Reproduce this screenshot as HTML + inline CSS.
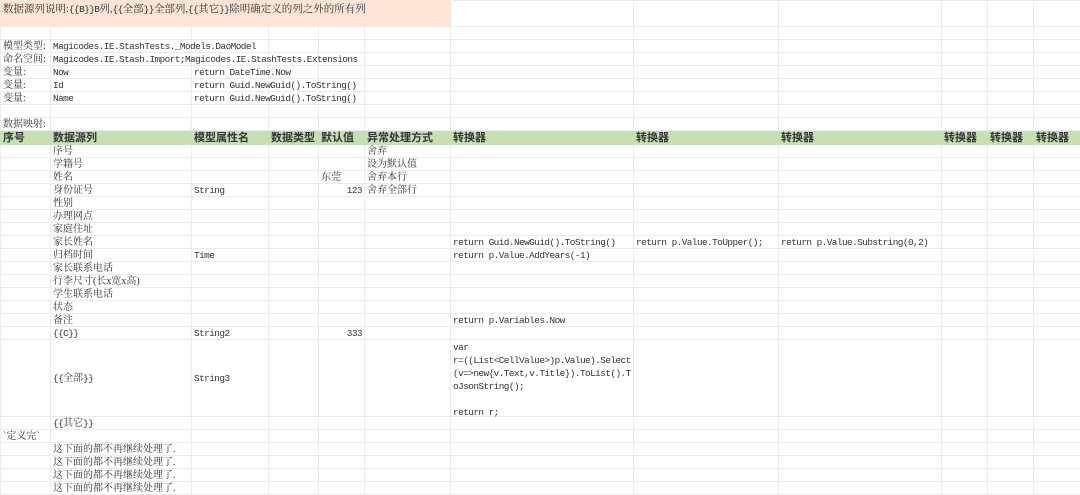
<!DOCTYPE html>
<html><head><meta charset="utf-8">
<style>
html,body{margin:0;padding:0;background:#fff;width:1080px;height:495px;overflow:hidden}
table{border-collapse:collapse;table-layout:fixed;width:1080px;font-family:"Liberation Serif","Noto Serif CJK SC",serif;font-size:10px;color:#333}
tr{height:13px}
td{border:1px solid #ececec;height:12px;padding:0 0 0 2px;white-space:nowrap;overflow:visible;vertical-align:top}
.c{height:12px;line-height:13px;overflow:visible;white-space:nowrap}
.m{font-family:"Liberation Mono","Noto Serif CJK SC",monospace;font-size:9.4px;letter-spacing:-0.55px;line-height:12px}
.r{text-align:right;padding-right:2px}
tr.h td{background:#c6e0b4;font-weight:bold;font-size:11px;font-family:"Liberation Sans","Noto Sans CJK SC",sans-serif;height:13px;border-color:#c6e0b4}
tr.h .c{height:13px;line-height:14px}
td.p{background:#fce4d6;height:25px;border-color:#fce4d6}
td.p .c{padding-top:2px;font-size:10.5px}
.t{height:76px!important;padding-top:1px;box-sizing:border-box;font-family:"Liberation Mono",monospace;font-size:9.4px;letter-spacing:-0.55px}
.t div{height:13px;line-height:13px}
.mid{padding-top:32px;box-sizing:border-box;height:76px!important}
</style></head><body>
<table>
<colgroup><col style="width:50px"><col style="width:141px"><col style="width:77px"><col style="width:50px"><col style="width:46px"><col style="width:86px"><col style="width:183px"><col style="width:145px"><col style="width:163px"><col style="width:46px"><col style="width:46px"><col style="width:47px"></colgroup>
<tr style="height:26px"><td class="p" colspan="6"><div class="c">数据源列说明:<span class="m">{{B}}B</span>列,<span class="m">{{</span>全部<span class="m">}}</span>全部列,<span class="m">{{</span>其它<span class="m">}}</span>除明确定义的列之外的所有列</div></td><td></td><td></td><td></td><td></td><td></td><td></td></tr>
<tr><td></td><td></td><td></td><td></td><td></td><td></td><td></td><td></td><td></td><td></td><td></td><td></td></tr>
<tr><td><div class="c">模型类型:</div></td><td><div class="c"><span class="m">Magicodes.IE.StashTests._Models.DaoModel</span></div></td><td></td><td></td><td></td><td></td><td></td><td></td><td></td><td></td><td></td><td></td></tr>
<tr><td><div class="c">命名空间:</div></td><td><div class="c"><span class="m">Magicodes.IE.Stash.Import;Magicodes.IE.StashTests.Extensions</span></div></td><td></td><td></td><td></td><td></td><td></td><td></td><td></td><td></td><td></td><td></td></tr>
<tr><td><div class="c">变量:</div></td><td><div class="c"><span class="m">Now</span></div></td><td><div class="c"><span class="m">return DateTime.Now</span></div></td><td></td><td></td><td></td><td></td><td></td><td></td><td></td><td></td><td></td></tr>
<tr><td><div class="c">变量:</div></td><td><div class="c"><span class="m">Id</span></div></td><td><div class="c"><span class="m">return Guid.NewGuid().ToString()</span></div></td><td></td><td></td><td></td><td></td><td></td><td></td><td></td><td></td><td></td></tr>
<tr><td><div class="c">变量:</div></td><td><div class="c"><span class="m">Name</span></div></td><td><div class="c"><span class="m">return Guid.NewGuid().ToString()</span></div></td><td></td><td></td><td></td><td></td><td></td><td></td><td></td><td></td><td></td></tr>
<tr><td></td><td></td><td></td><td></td><td></td><td></td><td></td><td></td><td></td><td></td><td></td><td></td></tr>
<tr><td><div class="c">数据映射:</div></td><td></td><td></td><td></td><td></td><td></td><td></td><td></td><td></td><td></td><td></td><td></td></tr>
<tr class="h" style="height:14px"><td><div class="c">序号</div></td><td><div class="c">数据源列</div></td><td><div class="c">模型属性名</div></td><td><div class="c">数据类型</div></td><td><div class="c">默认值</div></td><td><div class="c">异常处理方式</div></td><td><div class="c">转换器</div></td><td><div class="c">转换器</div></td><td><div class="c">转换器</div></td><td><div class="c">转换器</div></td><td><div class="c">转换器</div></td><td><div class="c">转换器</div></td></tr>
<tr><td></td><td><div class="c">序号</div></td><td></td><td></td><td></td><td><div class="c">舍弃</div></td><td></td><td></td><td></td><td></td><td></td><td></td></tr>
<tr><td></td><td><div class="c">学籍号</div></td><td></td><td></td><td></td><td><div class="c">设为默认值</div></td><td></td><td></td><td></td><td></td><td></td><td></td></tr>
<tr><td></td><td><div class="c">姓名</div></td><td></td><td></td><td><div class="c">东莞</div></td><td><div class="c">舍弃本行</div></td><td></td><td></td><td></td><td></td><td></td><td></td></tr>
<tr><td></td><td><div class="c">身份证号</div></td><td><div class="c"><span class="m">String</span></div></td><td></td><td class="r"><div class="c"><span class="m">123</span></div></td><td><div class="c">舍弃全部行</div></td><td></td><td></td><td></td><td></td><td></td><td></td></tr>
<tr><td></td><td><div class="c">性别</div></td><td></td><td></td><td></td><td></td><td></td><td></td><td></td><td></td><td></td><td></td></tr>
<tr><td></td><td><div class="c">办理网点</div></td><td></td><td></td><td></td><td></td><td></td><td></td><td></td><td></td><td></td><td></td></tr>
<tr><td></td><td><div class="c">家庭住址</div></td><td></td><td></td><td></td><td></td><td></td><td></td><td></td><td></td><td></td><td></td></tr>
<tr><td></td><td><div class="c">家长姓名</div></td><td></td><td></td><td></td><td></td><td><div class="c"><span class="m">return Guid.NewGuid().ToString()</span></div></td><td><div class="c"><span class="m">return p.Value.ToUpper();</span></div></td><td><div class="c"><span class="m">return p.Value.Substring(0,2)</span></div></td><td></td><td></td><td></td></tr>
<tr><td></td><td><div class="c">归档时间</div></td><td><div class="c"><span class="m">Time</span></div></td><td></td><td></td><td></td><td><div class="c"><span class="m">return p.Value.AddYears(-1)</span></div></td><td></td><td></td><td></td><td></td><td></td></tr>
<tr><td></td><td><div class="c">家长联系电话</div></td><td></td><td></td><td></td><td></td><td></td><td></td><td></td><td></td><td></td><td></td></tr>
<tr><td></td><td><div class="c">行李尺寸(长x宽x高)</div></td><td></td><td></td><td></td><td></td><td></td><td></td><td></td><td></td><td></td><td></td></tr>
<tr><td></td><td><div class="c">学生联系电话</div></td><td></td><td></td><td></td><td></td><td></td><td></td><td></td><td></td><td></td><td></td></tr>
<tr><td></td><td><div class="c">状态</div></td><td></td><td></td><td></td><td></td><td></td><td></td><td></td><td></td><td></td><td></td></tr>
<tr><td></td><td><div class="c">备注</div></td><td></td><td></td><td></td><td></td><td><div class="c"><span class="m">return p.Variables.Now</span></div></td><td></td><td></td><td></td><td></td><td></td></tr>
<tr><td></td><td><div class="c"><span class="m">{{C}}</span></div></td><td><div class="c"><span class="m">String2</span></div></td><td></td><td class="r"><div class="c"><span class="m">333</span></div></td><td></td><td></td><td></td><td></td><td></td><td></td><td></td></tr>
<tr style="height:77px"><td></td><td><div class="c mid"><span class="m">{{</span>全部<span class="m">}}</span></div></td><td><div class="c mid"><span class="m">String3</span></div></td><td></td><td></td><td></td><td><div class="t"><div>var</div><div>r=((List&lt;CellValue&gt;)p.Value).Select</div><div>(v=&gt;new{v.Text,v.Title}).ToList().T</div><div>oJsonString();</div><div></div><div>return r;</div></div></td><td></td><td></td><td></td><td></td><td></td></tr>
<tr><td></td><td><div class="c"><span class="m">{{</span>其它<span class="m">}}</span></div></td><td></td><td></td><td></td><td></td><td></td><td></td><td></td><td></td><td></td><td></td></tr>
<tr><td><div class="c">`定义完`</div></td><td></td><td></td><td></td><td></td><td></td><td></td><td></td><td></td><td></td><td></td><td></td></tr>
<tr><td></td><td><div class="c">这下面的都不再继续处理了.</div></td><td></td><td></td><td></td><td></td><td></td><td></td><td></td><td></td><td></td><td></td></tr>
<tr><td></td><td><div class="c">这下面的都不再继续处理了.</div></td><td></td><td></td><td></td><td></td><td></td><td></td><td></td><td></td><td></td><td></td></tr>
<tr><td></td><td><div class="c">这下面的都不再继续处理了.</div></td><td></td><td></td><td></td><td></td><td></td><td></td><td></td><td></td><td></td><td></td></tr>
<tr><td></td><td><div class="c">这下面的都不再继续处理了.</div></td><td></td><td></td><td></td><td></td><td></td><td></td><td></td><td></td><td></td><td></td></tr>
</table>
</body></html>
